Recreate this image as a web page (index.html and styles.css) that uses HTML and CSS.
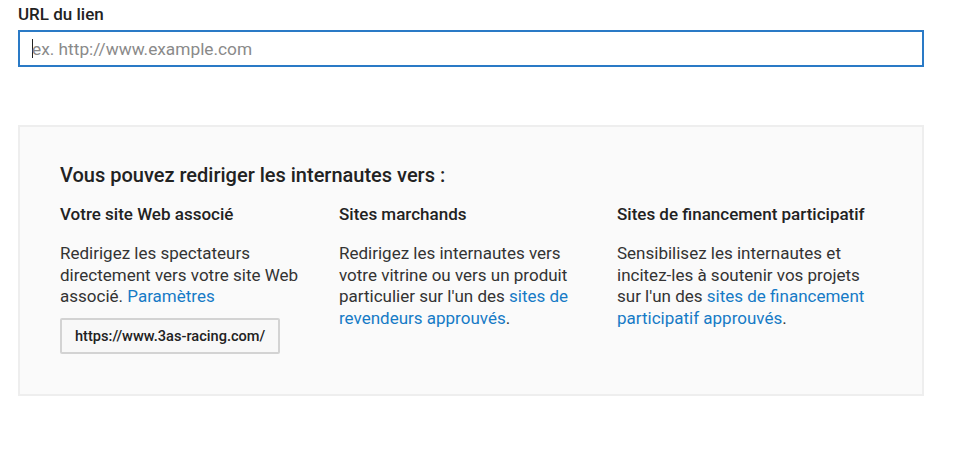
FILE: index.html
```html
<!DOCTYPE html>
<html lang="fr">
<head>
<meta charset="utf-8">
<link rel="stylesheet" href="styles.css">
</head>
<body>
<div class="page">
  <label class="field-label">URL du lien</label>
  <div class="input"><span class="caret"></span><span class="placeholder">ex. http://www.example.com</span></div>

  <div class="panel">
    <h2 class="panel-title">Vous pouvez rediriger les internautes vers :</h2>
    <div class="cols">
      <div class="col">
        <h3 class="col-title">Votre site Web associé</h3>
        <p class="col-text">Redirigez les spectateurs directement vers votre site Web associé. <a href="#">Paramètres</a></p>
        <div class="chip">https://www.3as-racing.com/</div>
      </div>
      <div class="col">
        <h3 class="col-title">Sites marchands</h3>
        <p class="col-text">Redirigez les internautes vers votre vitrine ou vers un produit particulier sur l'un des <a href="#">sites de revendeurs approuvés</a>.</p>
      </div>
      <div class="col">
        <h3 class="col-title">Sites de financement participatif</h3>
        <p class="col-text">Sensibilisez les internautes et incitez-les à soutenir vos projets sur l'un des <a href="#">sites de financement participatif approuvés</a>.</p>
      </div>
    </div>
  </div>
</div>
</body>
</html>
```

FILE: styles.css
```css
html, body {
  margin: 0;
  padding: 0;
  background: #fff;
}
body {
  font-family: Roboto, "Liberation Sans", Arial, sans-serif;
  color: #333;
}
.page {
  width: 906px;
  padding: 4px 0 0 18px;
}
.field-label {
  display: block;
  font-size: 17px;
  font-weight: 500;
  color: #222;
  line-height: 20px;
  margin-bottom: 6px;
}
.input {
  box-sizing: border-box;
  height: 37px;
  border: 2px solid #2a7ac6;
  display: flex;
  align-items: center;
  padding-left: 12px;
}
.caret {
  width: 1px;
  height: 19px;
  background: #222;
}
.placeholder {
  font-size: 17.3px;
  color: #8a8a8a;
  margin-left: -1px;
}
.panel {
  box-sizing: border-box;
  margin-top: 58px;
  height: 271px;
  background: #fafafa;
  border: 2px solid #eeeeee;
  padding: 36px 26px 0 40px;
}
.panel-title {
  margin: 0;
  font-size: 20px;
  font-weight: 500;
  color: #222;
  line-height: 24px;
}
.cols {
  display: grid;
  grid-template-columns: 279px 278px 279px;
  margin-top: 17px;
}
.col-title {
  margin: 0;
  font-size: 17px;
  font-weight: 500;
  color: #222;
  line-height: 20px;
}
.col-text {
  margin: 19px 0 0;
  font-size: 17px;
  line-height: 21.7px;
  color: #333;
  max-width: 260px;
}
.col-text a {
  color: #167ac6;
  text-decoration: none;
}
.chip {
  display: inline-block;
  margin-top: 10px;
  box-sizing: border-box;
  width: 220px;
  height: 36px;
  line-height: 32px;
  padding-left: 13px;
  background: #f8f8f8;
  border: 2px solid #d3d3d3;
  border-radius: 2px;
  font-size: 14.6px;
  font-weight: 500;
  color: #222;
}
```
